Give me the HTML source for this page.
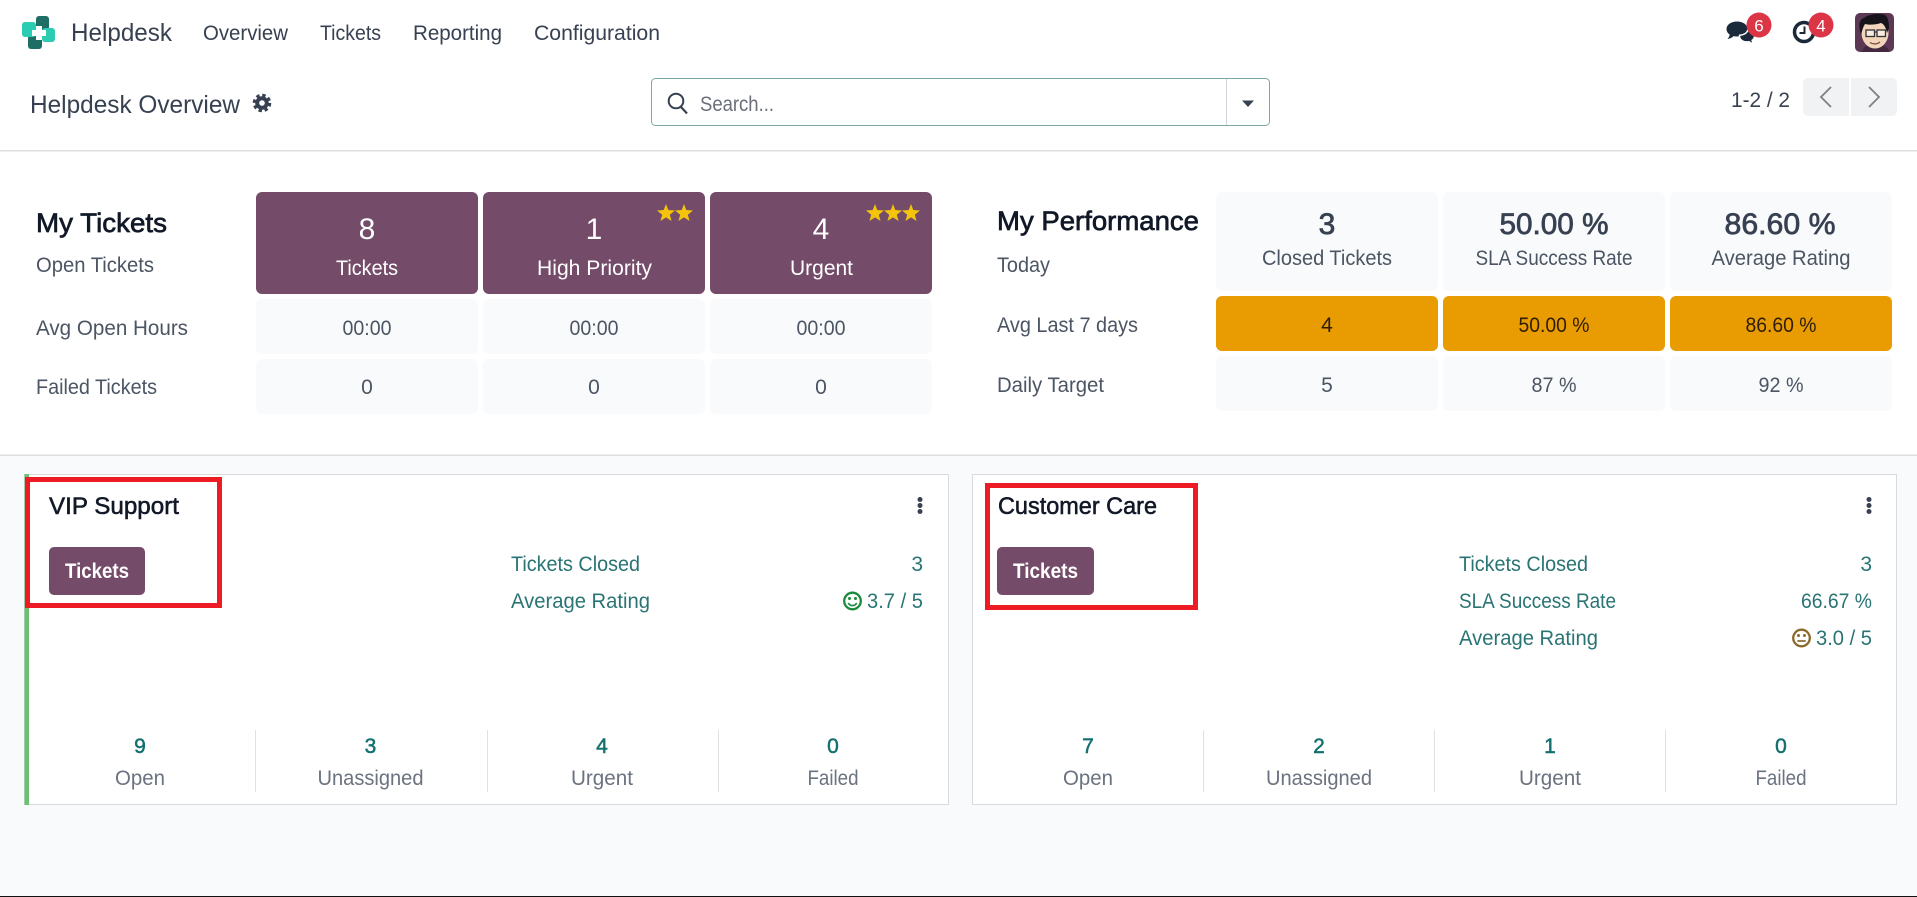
<!DOCTYPE html>
<html lang="en">
<head>
<meta charset="utf-8">
<title>Helpdesk Overview</title>
<style>
html,body{margin:0;padding:0;background:#fff;width:1917px;height:897px;overflow:hidden}
svg{display:block}
text{font-family:"Liberation Sans",Arial,sans-serif;font-size:21px;fill:#4b5563}
.nav{fill:#374151}
.h{fill:#111827;font-size:27px;stroke:#111827;stroke-width:.7}
.w{fill:#fff}
.big{font-size:30px;fill:#374151;stroke:#374151;stroke-width:.75}
.m{text-anchor:middle}
.o{fill:#2f1d06}
.t{fill:#2a7474}
.n{fill:#14706f;stroke:#14706f;stroke-width:.5}
.g{fill:#6b7280}
.ct{fill:#111827;font-size:24px;stroke:#111827;stroke-width:.55}
.b{fill:#fff;font-weight:bold}
</style>
</head>
<body>
<svg width="1917" height="897" viewBox="0 0 1917 897" xmlns="http://www.w3.org/2000/svg">
<defs>
<polygon id="star" points="9,0 11.3,6 18,6.5 12.8,10.7 14.6,17 9,13.4 3.4,17 5.2,10.7 0,6.5 6.700,6" fill="#f3c40b"/>
</defs>
<rect width="1917" height="897" fill="#fff"/>

<!-- logo -->
<rect x="36" y="16" width="13" height="14" rx="3" fill="#1f6e66"/>
<rect x="28" y="35" width="14" height="14" rx="3" fill="#1f6e66"/>
<rect x="22" y="22" width="14" height="15" rx="3" fill="#2ccbb3"/>
<rect x="42" y="28" width="13" height="14" rx="3" fill="#2ccbb3"/>
<rect x="36" y="26" width="6" height="14" fill="#fff"/>
<rect x="32" y="30" width="14" height="6" fill="#fff"/>

<!-- navbar -->
<text class="nav" x="71" y="41" style="font-size:25px" textLength="101" lengthAdjust="spacingAndGlyphs">Helpdesk</text>
<text class="nav" x="203" y="40" textLength="85" lengthAdjust="spacingAndGlyphs">Overview</text>
<text class="nav" x="320" y="40" textLength="61" lengthAdjust="spacingAndGlyphs">Tickets</text>
<text class="nav" x="413" y="40" textLength="89" lengthAdjust="spacingAndGlyphs">Reporting</text>
<text class="nav" x="534" y="40" textLength="126" lengthAdjust="spacingAndGlyphs">Configuration</text>

<!-- chat icon -->
<path d="M1737 21.5c6 0 10.500 3.300 10.500 7.500s-4.500 7.500-10.500 7.500c-1.200 0-2.300-.1-3.400-.4-1.500 1.500-3.700 2.500-6.100 2.800 1.100-1.200 1.900-2.600 2.200-4.300-2-1.400-3.200-3.400-3.200-5.600 0-4.200 4.500-7.500 10.500-7.500z" fill="#1b2a3b"/>
<path d="M1747 30.500c4 0 7.500 2.500 7.500 5.700 0 1.700-1 3.200-2.400 4.200.2 1.300.8 2.500 1.700 3.400-1.900-.2-3.600-1-4.800-2.100-.6.1-1.300.2-2 .2-4.200 0-7.500-2.400-7.500-5.700 0-.4 0-.6.1-1 4.100-.2 7.400-2.200 8-4.700z" fill="#1b2a3b" stroke="#fff" stroke-width="1.500"/>
<circle cx="1759" cy="25" r="12.500" fill="#dc3545"/>
<text class="w m" x="1759" y="31.500" style="font-size:17px">6</text>

<!-- clock icon -->
<circle cx="1804" cy="32" r="9.500" fill="#fff" stroke="#1b2a3b" stroke-width="3.500"/>
<path d="M1804.500 26.500v6.500h-5" fill="none" stroke="#1b2a3b" stroke-width="2"/>
<circle cx="1821" cy="25" r="12.500" fill="#dc3545"/>
<text class="w m" x="1821" y="31.500" style="font-size:17px">4</text>

<!-- avatar -->
<rect x="1855" y="13" width="39" height="39" rx="5" fill="#5c3855"/>
<path d="M1862 52c1-6 6-8 13-8s13 2 14 8z" fill="#43283f"/>
<ellipse cx="1875" cy="33" rx="13.500" ry="15.500" fill="#f3d5bb"/>
<path d="M1861 35c-2-8-3-15 3-17 5-4 15-5 21-3 3 2 4 7 4 13l-2 5c-1-5-3-9-6-10-6 2-12 2-16 1-2 3-3 7-4 11z" fill="#15141a"/>
<rect x="1866" y="30" width="8.500" height="6.500" fill="#fff" fill-opacity=".55" stroke="#333" stroke-width="1.300"/>
<rect x="1877" y="30" width="8.500" height="6.500" fill="#fff" fill-opacity=".55" stroke="#333" stroke-width="1.300"/>
<path d="M1874.500 32h2.500" stroke="#333" stroke-width="1.200"/>
<path d="M1870 42.500c3 2 7 2 10-.5" fill="none" stroke="#7d4a3d" stroke-width="1.300"/>

<!-- control panel -->
<text class="nav" x="30" y="113" style="font-size:25px" textLength="210" lengthAdjust="spacingAndGlyphs">Helpdesk Overview</text>
<g transform="translate(262 103)">
  <circle r="6.800" fill="#374151"/>
  <circle r="7.800" fill="none" stroke="#374151" stroke-width="3" stroke-dasharray="3.400 2.730"/>
  <circle r="2.800" fill="#fff"/>
</g>

<rect x="651.500" y="78.500" width="618" height="47" rx="4" fill="#fff" stroke="#7fa6a6"/>
<path d="M1226.500 79v46" stroke="#ced4da"/>
<circle cx="676" cy="101" r="7.300" fill="none" stroke="#374151" stroke-width="2"/>
<path d="M681 107l6 6.500" stroke="#374151" stroke-width="2.200"/>
<text x="700" y="111" style="fill:#6b6f7a" textLength="74" lengthAdjust="spacingAndGlyphs">Search...</text>
<path d="M1242 100.500h12l-6 6.500z" fill="#374151"/>

<text class="nav" x="1731" y="107" textLength="59" lengthAdjust="spacingAndGlyphs">1-2 / 2</text>
<path d="M1803 83a5 5 0 0 1 5-5h41v38h-41a5 5 0 0 1-5-5z" fill="#f1f2f4"/>
<path d="M1851 78h41a5 5 0 0 1 5 5v28a5 5 0 0 1-5 5h-41z" fill="#f1f2f4"/>
<path d="M1831 87l-10 10 10 10" fill="none" stroke="#7d8288" stroke-width="1.800"/>
<path d="M1869 87l10 10-10 10" fill="none" stroke="#7d8288" stroke-width="1.800"/>
<rect x="0" y="150" width="1917" height="1.500" fill="#dcdfe2"/>

<!-- My Tickets -->
<text class="h" x="36" y="232" textLength="131" lengthAdjust="spacingAndGlyphs">My Tickets</text>
<text x="36" y="272" textLength="118" lengthAdjust="spacingAndGlyphs">Open Tickets</text>
<text x="36" y="335" textLength="152" lengthAdjust="spacingAndGlyphs">Avg Open Hours</text>
<text x="36" y="394" textLength="121" lengthAdjust="spacingAndGlyphs">Failed Tickets</text>

<rect x="256" y="192" width="222" height="102" rx="6" fill="#744b68"/>
<rect x="483" y="192" width="222" height="102" rx="6" fill="#744b68"/>
<rect x="710" y="192" width="222" height="102" rx="6" fill="#744b68"/>
<rect x="256" y="299" width="222" height="55" rx="6" fill="#f9fafb"/>
<rect x="483" y="299" width="222" height="55" rx="6" fill="#f9fafb"/>
<rect x="710" y="299" width="222" height="55" rx="6" fill="#f9fafb"/>
<rect x="256" y="359" width="222" height="55" rx="6" fill="#f9fafb"/>
<rect x="483" y="359" width="222" height="55" rx="6" fill="#f9fafb"/>
<rect x="710" y="359" width="222" height="55" rx="6" fill="#f9fafb"/>

<use href="#star" x="657" y="204"/><use href="#star" x="675" y="204"/>
<use href="#star" x="866" y="204"/><use href="#star" x="884" y="204"/><use href="#star" x="902" y="204"/>

<text class="w m" x="367" y="239" style="font-size:30px">8</text>
<text class="w m" x="594" y="239" style="font-size:30px">1</text>
<text class="w m" x="821" y="239" style="font-size:30px">4</text>
<text class="w m" x="367" y="275" textLength="62" lengthAdjust="spacingAndGlyphs">Tickets</text>
<text class="w m" x="594.500" y="275" textLength="115" lengthAdjust="spacingAndGlyphs">High Priority</text>
<text class="w m" x="821.500" y="275" textLength="63" lengthAdjust="spacingAndGlyphs">Urgent</text>
<text class="m" x="367" y="335" textLength="49" lengthAdjust="spacingAndGlyphs">00:00</text>
<text class="m" x="594" y="335" textLength="49" lengthAdjust="spacingAndGlyphs">00:00</text>
<text class="m" x="821" y="335" textLength="49" lengthAdjust="spacingAndGlyphs">00:00</text>
<text class="m" x="367" y="394">0</text>
<text class="m" x="594" y="394">0</text>
<text class="m" x="821" y="394">0</text>

<!-- My Performance -->
<text class="h" x="997" y="230" textLength="202" lengthAdjust="spacingAndGlyphs">My Performance</text>
<text x="997" y="272" textLength="53" lengthAdjust="spacingAndGlyphs">Today</text>
<text x="997" y="332" textLength="141" lengthAdjust="spacingAndGlyphs">Avg Last 7 days</text>
<text x="997" y="392" textLength="107" lengthAdjust="spacingAndGlyphs">Daily Target</text>

<rect x="1216" y="192" width="222" height="99" rx="6" fill="#f9fafb"/>
<rect x="1443" y="192" width="222" height="99" rx="6" fill="#f9fafb"/>
<rect x="1670" y="192" width="222" height="99" rx="6" fill="#f9fafb"/>
<rect x="1216" y="296" width="222" height="55" rx="6" fill="#e89c02"/>
<rect x="1443" y="296" width="222" height="55" rx="6" fill="#e89c02"/>
<rect x="1670" y="296" width="222" height="55" rx="6" fill="#e89c02"/>
<rect x="1216" y="356" width="222" height="55" rx="6" fill="#f9fafb"/>
<rect x="1443" y="356" width="222" height="55" rx="6" fill="#f9fafb"/>
<rect x="1670" y="356" width="222" height="55" rx="6" fill="#f9fafb"/>

<text class="big m" x="1327" y="234">3</text>
<text class="big m" x="1554" y="234" textLength="109" lengthAdjust="spacingAndGlyphs">50.00 %</text>
<text class="big m" x="1780" y="234" textLength="111" lengthAdjust="spacingAndGlyphs">86.60 %</text>
<text class="m" x="1327" y="265" textLength="130" lengthAdjust="spacingAndGlyphs">Closed Tickets</text>
<text class="m" x="1554" y="265" textLength="157" lengthAdjust="spacingAndGlyphs">SLA Success Rate</text>
<text class="m" x="1781" y="265" textLength="139" lengthAdjust="spacingAndGlyphs">Average Rating</text>
<text class="o m" x="1327" y="332">4</text>
<text class="o m" x="1554" y="332" textLength="71" lengthAdjust="spacingAndGlyphs">50.00 %</text>
<text class="o m" x="1781" y="332" textLength="71" lengthAdjust="spacingAndGlyphs">86.60 %</text>
<text class="m" x="1327" y="392">5</text>
<text class="m" x="1554" y="392" textLength="45" lengthAdjust="spacingAndGlyphs">87 %</text>
<text class="m" x="1781" y="392" textLength="45" lengthAdjust="spacingAndGlyphs">92 %</text>

<!-- kanban area -->
<rect x="0" y="455" width="1917" height="441" fill="#f9fafb"/>
<rect x="0" y="454.500" width="1917" height="1.500" fill="#dcdfe2"/>
<rect x="0" y="896" width="1917" height="1" fill="#111"/>

<!-- card 1 -->
<rect x="24.500" y="474.500" width="924" height="330" fill="#fff" stroke="#d8dadd"/>
<rect x="24.500" y="474" width="4.500" height="331" fill="#6cc070"/>
<text class="ct" x="49" y="514" textLength="130" lengthAdjust="spacingAndGlyphs">VIP Support</text>
<rect x="49" y="547" width="96" height="48" rx="5" fill="#744b68"/>
<text class="b" x="65" y="578" textLength="64" lengthAdjust="spacingAndGlyphs">Tickets</text>
<circle cx="920" cy="499.500" r="2.500" fill="#374151"/><circle cx="920" cy="505.500" r="2.500" fill="#374151"/><circle cx="920" cy="511.500" r="2.500" fill="#374151"/>
<text class="t" x="511" y="571" textLength="129" lengthAdjust="spacingAndGlyphs">Tickets Closed</text>
<text class="t" x="511" y="608" textLength="139" lengthAdjust="spacingAndGlyphs">Average Rating</text>
<text class="t" x="923" y="571" text-anchor="end">3</text>
<text class="t" x="867" y="608" textLength="56" lengthAdjust="spacingAndGlyphs">3.7 / 5</text>
<g transform="translate(852.500 601)" fill="none" stroke="#1c8a3c" stroke-width="2.300">
  <circle r="8.300"/>
  <circle cx="-3" cy="-2.500" r="1.500" fill="#1c8a3c" stroke="none"/>
  <circle cx="3" cy="-2.500" r="1.500" fill="#1c8a3c" stroke="none"/>
  <path d="M-4.200 2c1.800 3.400 6.600 3.400 8.400 0" stroke-width="1.700"/>
</g>
<path d="M255.500 730v62M487.500 730v62M718.500 730v62" stroke="#dfe1e4"/>
<text class="n m" x="140" y="753">9</text>
<text class="n m" x="370.500" y="753">3</text>
<text class="n m" x="602" y="753">4</text>
<text class="n m" x="833" y="753">0</text>
<text class="g m" x="140" y="785" textLength="50" lengthAdjust="spacingAndGlyphs">Open</text>
<text class="g m" x="370.500" y="785" textLength="106" lengthAdjust="spacingAndGlyphs">Unassigned</text>
<text class="g m" x="602" y="785" textLength="62" lengthAdjust="spacingAndGlyphs">Urgent</text>
<text class="g m" x="833" y="785" textLength="51" lengthAdjust="spacingAndGlyphs">Failed</text>

<!-- card 2 -->
<rect x="972.500" y="474.500" width="924" height="330" fill="#fff" stroke="#d8dadd"/>
<text class="ct" x="998" y="514" textLength="159" lengthAdjust="spacingAndGlyphs">Customer Care</text>
<rect x="997" y="547" width="97" height="48" rx="5" fill="#744b68"/>
<text class="b" x="1013" y="578" textLength="65" lengthAdjust="spacingAndGlyphs">Tickets</text>
<circle cx="1869" cy="499.500" r="2.500" fill="#374151"/><circle cx="1869" cy="505.500" r="2.500" fill="#374151"/><circle cx="1869" cy="511.500" r="2.500" fill="#374151"/>
<text class="t" x="1459" y="571" textLength="129" lengthAdjust="spacingAndGlyphs">Tickets Closed</text>
<text class="t" x="1459" y="608" textLength="157" lengthAdjust="spacingAndGlyphs">SLA Success Rate</text>
<text class="t" x="1459" y="645" textLength="139" lengthAdjust="spacingAndGlyphs">Average Rating</text>
<text class="t" x="1872" y="571" text-anchor="end">3</text>
<text class="t" x="1801" y="608" textLength="71" lengthAdjust="spacingAndGlyphs">66.67 %</text>
<text class="t" x="1816" y="645" textLength="56" lengthAdjust="spacingAndGlyphs">3.0 / 5</text>
<g transform="translate(1801.500 638)" fill="none" stroke="#8a6a2c" stroke-width="2.300">
  <circle r="8.300"/>
  <circle cx="-3" cy="-2.500" r="1.500" fill="#8a6a2c" stroke="none"/>
  <circle cx="3" cy="-2.500" r="1.500" fill="#8a6a2c" stroke="none"/>
  <path d="M-4.200 3h8.400" stroke-width="1.700"/>
</g>
<path d="M1203.500 730v62M1434.500 730v62M1665.500 730v62" stroke="#dfe1e4"/>
<text class="n m" x="1088" y="753">7</text>
<text class="n m" x="1319" y="753">2</text>
<text class="n m" x="1550" y="753">1</text>
<text class="n m" x="1781" y="753">0</text>
<text class="g m" x="1088" y="785" textLength="50" lengthAdjust="spacingAndGlyphs">Open</text>
<text class="g m" x="1319" y="785" textLength="106" lengthAdjust="spacingAndGlyphs">Unassigned</text>
<text class="g m" x="1550" y="785" textLength="62" lengthAdjust="spacingAndGlyphs">Urgent</text>
<text class="g m" x="1781" y="785" textLength="51" lengthAdjust="spacingAndGlyphs">Failed</text>

<!-- red annotation boxes -->
<rect x="27.500" y="479.500" width="192" height="126" fill="none" stroke="#ed1c24" stroke-width="5"/>
<rect x="987.500" y="485.500" width="208" height="122" fill="none" stroke="#ed1c24" stroke-width="5"/>
</svg>
</body>
</html>
